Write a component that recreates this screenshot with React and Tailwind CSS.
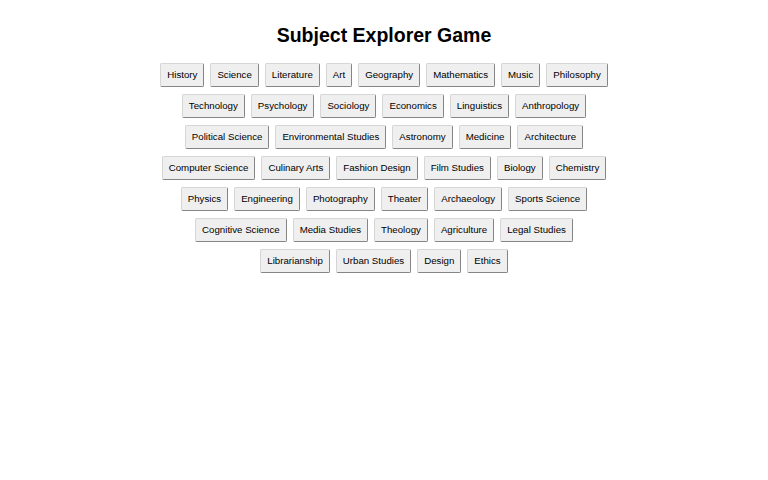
import React from 'react'

const rows = [
  ['History', 'Science', 'Literature', 'Art', 'Geography', 'Mathematics', 'Music', 'Philosophy'],
  ['Technology', 'Psychology', 'Sociology', 'Economics', 'Linguistics', 'Anthropology'],
  ['Political Science', 'Environmental Studies', 'Astronomy', 'Medicine', 'Architecture'],
  ['Computer Science', 'Culinary Arts', 'Fashion Design', 'Film Studies', 'Biology', 'Chemistry'],
  ['Physics', 'Engineering', 'Photography', 'Theater', 'Archaeology', 'Sports Science'],
  ['Cognitive Science', 'Media Studies', 'Theology', 'Agriculture', 'Legal Studies'],
  ['Librarianship', 'Urban Studies', 'Design', 'Ethics'],
]

const App = () => {
  return (
    <div className="min-h-[480px] bg-white font-['Liberation_Sans',Arial,sans-serif] text-black">
      {/* Title */}
      <h1 className="pt-[23px] mb-[16px] text-center text-[19.5px] leading-[24px] font-bold">
        Subject Explorer Game
      </h1>

      {/* Subject buttons */}
      <div className="flex flex-col items-center gap-y-[7px]">
        {rows.map((row, i) => (
          <div key={i} className="flex justify-center gap-x-[6px]">
            {row.map((s) => (
              <button
                key={s}
                className="h-[24px] px-[6px] text-[9.7px] leading-[12px] bg-[#efefef] border border-t-[#d6d6d6] border-l-[#d6d6d6] border-b-[#858585] border-r-[#858585] rounded-[2px]"
              >
                {s}
              </button>
            ))}
          </div>
        ))}
      </div>
    </div>
  )
}

export default App
